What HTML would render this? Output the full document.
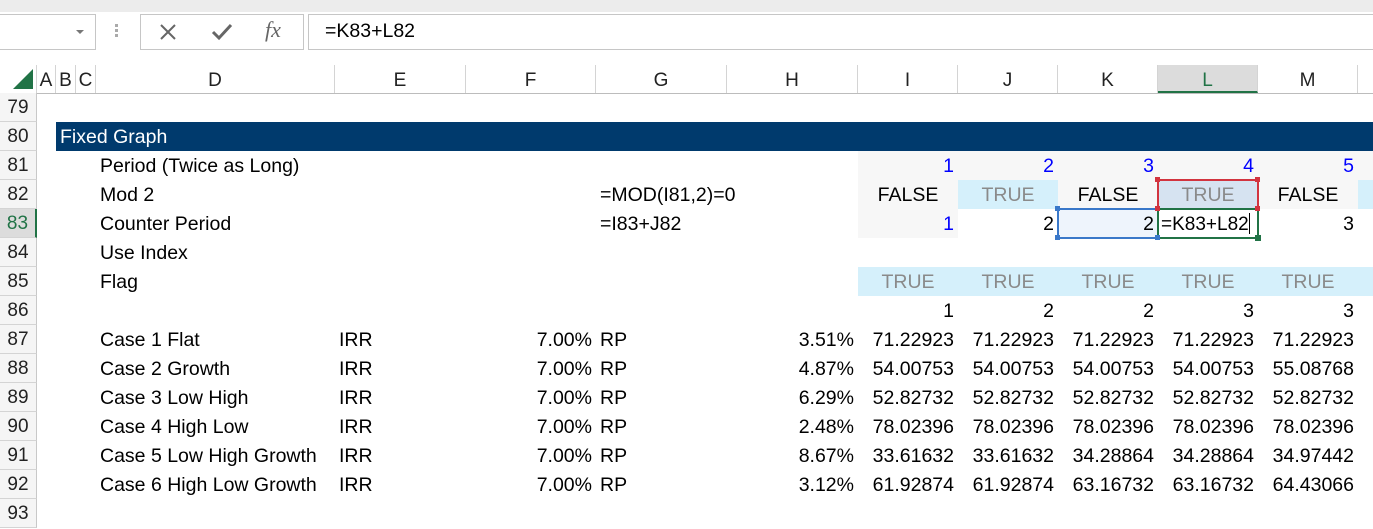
<!DOCTYPE html>
<html><head><meta charset="utf-8"><style>
body{margin:0;width:1373px;height:518px;overflow:hidden;background:#fff;font-family:"Liberation Sans",Calibri,sans-serif;position:relative}
.a{position:absolute}
.c{position:absolute;height:29px;line-height:31px;font-size:19.5px;white-space:nowrap;color:#000;box-sizing:border-box}
.r{text-align:right;padding-right:4px}
.m{text-align:center}
.rh{position:absolute;left:0;width:37px;height:29px;border-bottom:1px solid #d4d4d4;border-right:1px solid #c8c8c8;box-sizing:border-box;background:#f5f5f5;font-size:19px;line-height:30px;text-align:center;color:#222}
.ch{position:absolute;top:65px;height:28px;border-right:1px solid #d4d4d4;box-sizing:border-box;font-size:19px;line-height:32px;text-align:center;color:#222}
.b{color:#0000ff}
.g{color:#8a8a8a}
</style></head><body>
<div class="a" style="left:0;top:0;width:1373px;height:12px;background:#ececec"></div>
<div class="a" style="left:0;top:12px;width:1373px;height:53px;background:#fff"></div>
<div class="a" style="left:-2px;top:14px;width:96px;height:34px;border:1px solid #c6c6c6;background:#fff"></div>
<div class="a" style="left:76px;top:30px;border-left:4px solid transparent;border-right:4px solid transparent;border-top:4px solid #777"></div>
<div class="a" style="left:115px;top:24px;width:3px;height:14px;background:repeating-linear-gradient(#aaa 0 3px,transparent 3px 5px)"></div>
<div class="a" style="left:140px;top:14px;width:162px;height:34px;border:1px solid #c6c6c6;background:#fff"></div>
<svg class="a" style="left:158px;top:22px" width="20" height="20"><path d="M3 3L17 17M17 3L3 17" stroke="#666" stroke-width="2"/></svg>
<svg class="a" style="left:211px;top:22px" width="22" height="20"><path d="M2 10L8 16L20 3" stroke="#666" stroke-width="3" fill="none"/></svg>
<div class="a" style="left:265px;top:17px;font-family:'Liberation Serif',serif;font-style:italic;font-size:22px;color:#666">fx</div>
<div class="a" style="left:308px;top:14px;width:1070px;height:34px;border:1px solid #c6c6c6;background:#fff"></div>
<div class="a" style="left:325px;top:20px;font-size:19.5px">=K83+L82</div>

<div class="a" style="left:0;top:65px;width:1373px;height:28px;background:#fff;border-bottom:1px solid #bcbcbc"></div>
<div class="a" style="left:0;top:65px;width:37px;height:28px;border-right:1px solid #d4d4d4;box-sizing:border-box"></div>
<svg class="a" style="left:12px;top:68px" width="22" height="22"><path d="M21 1V21H1Z" fill="#217346"/></svg>
<div class="ch" style="left:37px;width:19px">A</div>
<div class="ch" style="left:56px;width:20px">B</div>
<div class="ch" style="left:76px;width:20px">C</div>
<div class="ch" style="left:96px;width:239px">D</div>
<div class="ch" style="left:335px;width:131px">E</div>
<div class="ch" style="left:466px;width:130px">F</div>
<div class="ch" style="left:596px;width:131px">G</div>
<div class="ch" style="left:727px;width:131px">H</div>
<div class="ch" style="left:858px;width:100px">I</div>
<div class="ch" style="left:958px;width:100px">J</div>
<div class="ch" style="left:1058px;width:100px">K</div>
<div class="ch" style="left:1158px;width:100px;background:#dcdcdc;border-bottom:2px solid #217346;color:#217346">L</div>
<div class="ch" style="left:1258px;width:100px">M</div>

<div class="rh" style="top:93px">79</div><div class="rh" style="top:122px">80</div><div class="rh" style="top:151px">81</div><div class="rh" style="top:180px">82</div><div class="rh" style="top:209px;background:#dcdcdc;border-right:2px solid #217346;color:#217346">83</div><div class="rh" style="top:238px">84</div><div class="rh" style="top:267px">85</div><div class="rh" style="top:296px">86</div><div class="rh" style="top:325px">87</div><div class="rh" style="top:354px">88</div><div class="rh" style="top:383px">89</div><div class="rh" style="top:412px">90</div><div class="rh" style="top:441px">91</div><div class="rh" style="top:470px">92</div><div class="rh" style="top:499px">93</div>

<div class="a" style="left:56px;top:122px;width:1317px;height:29px;background:#003a6d"></div>
<div class="c" style="left:60px;top:122px;color:#fff">Fixed Graph</div>
<div class="a" style="left:858px;top:151px;width:515px;height:29px;background:#f7f7f7"></div>
<div class="a" style="left:858px;top:180px;width:100px;height:29px;background:#f7f7f7"></div>
<div class="a" style="left:958px;top:180px;width:100px;height:29px;background:#d5f0fb"></div>
<div class="a" style="left:1058px;top:180px;width:100px;height:29px;background:#f7f7f7"></div>
<div class="a" style="left:1158px;top:180px;width:100px;height:29px;background:#d6e3f1"></div>
<div class="a" style="left:1258px;top:180px;width:100px;height:29px;background:#f7f7f7"></div>
<div class="a" style="left:1358px;top:180px;width:15px;height:29px;background:#d5f0fb"></div>
<div class="a" style="left:858px;top:209px;width:100px;height:29px;background:#f7f7f7"></div>
<div class="a" style="left:1058px;top:209px;width:100px;height:29px;background:#eef4fc"></div>
<div class="a" style="left:858px;top:267px;width:515px;height:29px;background:#d5f0fb"></div>

<div class="a" style="left:1157px;top:179px;width:98px;height:27px;border:2px solid #d2343f"></div>
<div class="a" style="left:1057px;top:208px;width:98px;height:27px;border:2px solid #3a78c9"></div>
<div class="a" style="left:1157px;top:208px;width:98px;height:27px;border:2px solid #217346"></div>
<div class="a" style="left:1155px;top:177px;width:5px;height:5px;background:#d2343f"></div>
<div class="a" style="left:1255px;top:177px;width:5px;height:5px;background:#d2343f"></div>
<div class="a" style="left:1055px;top:206px;width:5px;height:5px;background:#3a78c9"></div>
<div class="a" style="left:1155px;top:206px;width:5px;height:5px;background:#d2343f"></div>
<div class="a" style="left:1255px;top:206px;width:5px;height:5px;background:#d2343f"></div>
<div class="a" style="left:1055px;top:235px;width:5px;height:5px;background:#3a78c9"></div>
<div class="a" style="left:1155px;top:235px;width:5px;height:5px;background:#3a78c9"></div>
<div class="a" style="left:1255px;top:235px;width:6px;height:6px;background:#217346"></div>

<div class="c" style="left:100px;top:151px">Period (Twice as Long)</div>
<div class="c" style="left:100px;top:180px">Mod 2</div>
<div class="c" style="left:100px;top:209px">Counter Period</div>
<div class="c" style="left:100px;top:238px">Use Index</div>
<div class="c" style="left:100px;top:267px">Flag</div>
<div class="c" style="left:600px;top:180px">=MOD(I81,2)=0</div>
<div class="c" style="left:600px;top:209px">=I83+J82</div>

<div class="c r b" style="left:858px;top:151px;width:100px">1</div>
<div class="c r b" style="left:958px;top:151px;width:100px">2</div>
<div class="c r b" style="left:1058px;top:151px;width:100px">3</div>
<div class="c r b" style="left:1158px;top:151px;width:100px">4</div>
<div class="c r b" style="left:1258px;top:151px;width:100px">5</div>
<div class="c m" style="left:858px;top:180px;width:100px">FALSE</div>
<div class="c m g" style="left:958px;top:180px;width:100px">TRUE</div>
<div class="c m" style="left:1058px;top:180px;width:100px">FALSE</div>
<div class="c m g" style="left:1158px;top:180px;width:100px">TRUE</div>
<div class="c m" style="left:1258px;top:180px;width:100px">FALSE</div>
<div class="c r b" style="left:858px;top:209px;width:100px">1</div>
<div class="c r" style="left:958px;top:209px;width:100px">2</div>
<div class="c r" style="left:1058px;top:209px;width:100px">2</div>
<div class="c" style="left:1161px;top:209px;font-size:19px">=K83+L82</div>
<div class="a" style="left:1249px;top:213px;width:1px;height:21px;background:#000"></div>
<div class="c r" style="left:1258px;top:209px;width:100px">3</div>
<div class="c m g" style="left:858px;top:267px;width:100px">TRUE</div>
<div class="c m g" style="left:958px;top:267px;width:100px">TRUE</div>
<div class="c m g" style="left:1058px;top:267px;width:100px">TRUE</div>
<div class="c m g" style="left:1158px;top:267px;width:100px">TRUE</div>
<div class="c m g" style="left:1258px;top:267px;width:100px">TRUE</div>
<div class="c r" style="left:858px;top:296px;width:100px">1</div>
<div class="c r" style="left:958px;top:296px;width:100px">2</div>
<div class="c r" style="left:1058px;top:296px;width:100px">2</div>
<div class="c r" style="left:1158px;top:296px;width:100px">3</div>
<div class="c r" style="left:1258px;top:296px;width:100px">3</div>

<div class="c" style="left:100px;top:325px">Case 1 Flat</div><div class="c" style="left:339px;top:325px">IRR</div><div class="c r" style="left:466px;top:325px;width:130px">7.00%</div><div class="c" style="left:600px;top:325px">RP</div><div class="c r" style="left:727px;top:325px;width:131px">3.51%</div>
<div class="c r" style="left:858px;top:325px;width:100px">71.22923</div><div class="c r" style="left:958px;top:325px;width:100px">71.22923</div><div class="c r" style="left:1058px;top:325px;width:100px">71.22923</div><div class="c r" style="left:1158px;top:325px;width:100px">71.22923</div><div class="c r" style="left:1258px;top:325px;width:100px">71.22923</div>

<div class="c" style="left:100px;top:354px">Case 2 Growth</div><div class="c" style="left:339px;top:354px">IRR</div><div class="c r" style="left:466px;top:354px;width:130px">7.00%</div><div class="c" style="left:600px;top:354px">RP</div><div class="c r" style="left:727px;top:354px;width:131px">4.87%</div>
<div class="c r" style="left:858px;top:354px;width:100px">54.00753</div><div class="c r" style="left:958px;top:354px;width:100px">54.00753</div><div class="c r" style="left:1058px;top:354px;width:100px">54.00753</div><div class="c r" style="left:1158px;top:354px;width:100px">54.00753</div><div class="c r" style="left:1258px;top:354px;width:100px">55.08768</div>

<div class="c" style="left:100px;top:383px">Case 3 Low High</div><div class="c" style="left:339px;top:383px">IRR</div><div class="c r" style="left:466px;top:383px;width:130px">7.00%</div><div class="c" style="left:600px;top:383px">RP</div><div class="c r" style="left:727px;top:383px;width:131px">6.29%</div>
<div class="c r" style="left:858px;top:383px;width:100px">52.82732</div><div class="c r" style="left:958px;top:383px;width:100px">52.82732</div><div class="c r" style="left:1058px;top:383px;width:100px">52.82732</div><div class="c r" style="left:1158px;top:383px;width:100px">52.82732</div><div class="c r" style="left:1258px;top:383px;width:100px">52.82732</div>

<div class="c" style="left:100px;top:412px">Case 4 High Low</div><div class="c" style="left:339px;top:412px">IRR</div><div class="c r" style="left:466px;top:412px;width:130px">7.00%</div><div class="c" style="left:600px;top:412px">RP</div><div class="c r" style="left:727px;top:412px;width:131px">2.48%</div>
<div class="c r" style="left:858px;top:412px;width:100px">78.02396</div><div class="c r" style="left:958px;top:412px;width:100px">78.02396</div><div class="c r" style="left:1058px;top:412px;width:100px">78.02396</div><div class="c r" style="left:1158px;top:412px;width:100px">78.02396</div><div class="c r" style="left:1258px;top:412px;width:100px">78.02396</div>

<div class="c" style="left:100px;top:441px">Case 5 Low High Growth</div><div class="c" style="left:339px;top:441px">IRR</div><div class="c r" style="left:466px;top:441px;width:130px">7.00%</div><div class="c" style="left:600px;top:441px">RP</div><div class="c r" style="left:727px;top:441px;width:131px">8.67%</div>
<div class="c r" style="left:858px;top:441px;width:100px">33.61632</div><div class="c r" style="left:958px;top:441px;width:100px">33.61632</div><div class="c r" style="left:1058px;top:441px;width:100px">34.28864</div><div class="c r" style="left:1158px;top:441px;width:100px">34.28864</div><div class="c r" style="left:1258px;top:441px;width:100px">34.97442</div>

<div class="c" style="left:100px;top:470px">Case 6 High Low Growth</div><div class="c" style="left:339px;top:470px">IRR</div><div class="c r" style="left:466px;top:470px;width:130px">7.00%</div><div class="c" style="left:600px;top:470px">RP</div><div class="c r" style="left:727px;top:470px;width:131px">3.12%</div>
<div class="c r" style="left:858px;top:470px;width:100px">61.92874</div><div class="c r" style="left:958px;top:470px;width:100px">61.92874</div><div class="c r" style="left:1058px;top:470px;width:100px">63.16732</div><div class="c r" style="left:1158px;top:470px;width:100px">63.16732</div><div class="c r" style="left:1258px;top:470px;width:100px">64.43066</div>
</body></html>
